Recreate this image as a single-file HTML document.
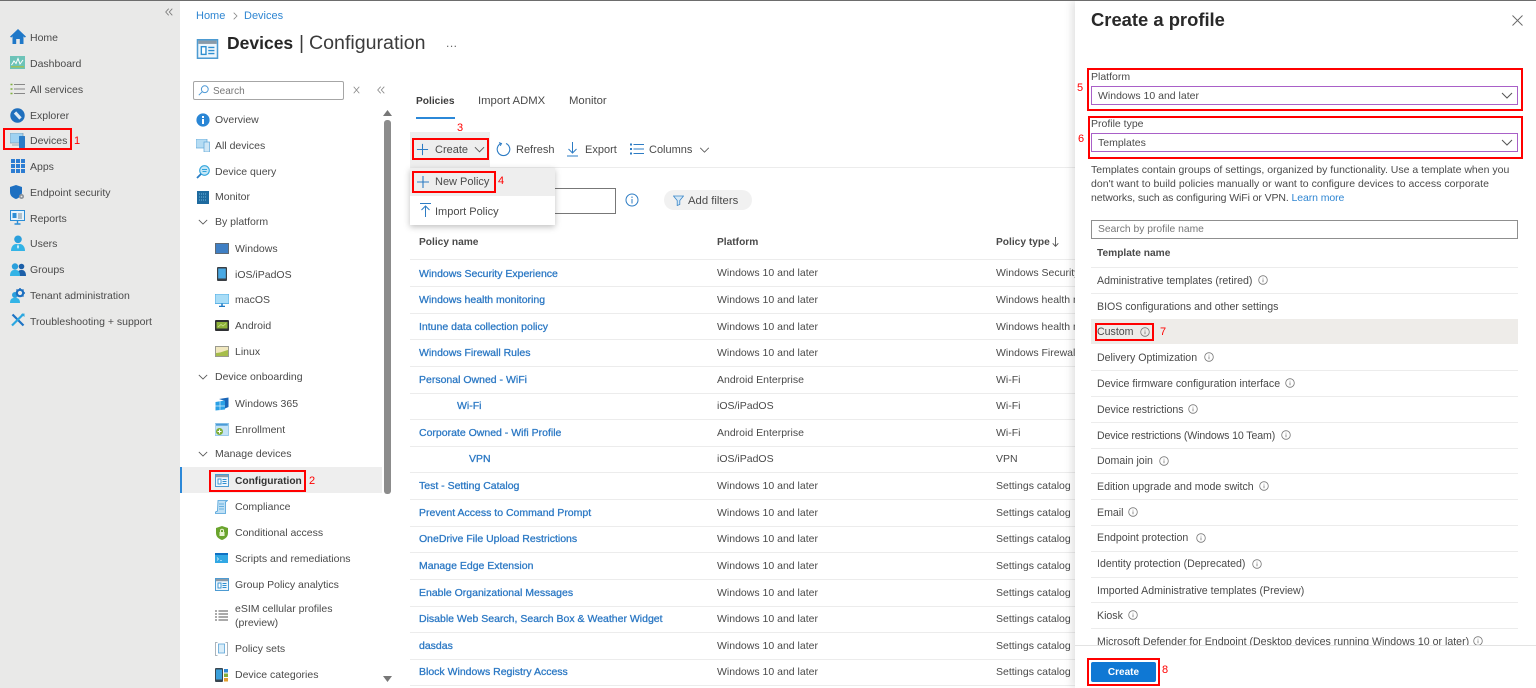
<!DOCTYPE html>
<html lang="en"><head><meta charset="utf-8"><title>Devices | Configuration</title>
<style>
html,body{margin:0;padding:0;background:#fff}
body{width:1536px;height:688px;position:relative;overflow:hidden;font:10.5px/16px "Liberation Sans",Arial,sans-serif;color:#4a4a4a;filter:blur(.35px)}
div,svg{position:absolute}
.t{position:absolute;white-space:nowrap;height:16px;line-height:16px;margin-top:1px}
.z{margin-top:0}
.m{font-size:11px}
.w{font-size:11.3px}
.l{color:#2b78c4;font-size:10.5px;-webkit-text-stroke:.28px #2b78c4;left:419px}
.p{left:717px;font-size:10.5px}.y{left:996px;font-size:10.5px}
.h{font-size:10.2px;font-weight:bold;color:#4a4a4a}
.r{height:1px;left:410px;width:665px;background:#ececec}
.pr{height:1px;left:1091px;width:427px;background:#ececec}
.b{border:2px solid #f00;box-sizing:border-box}
.n{color:#f00;font-size:11px}
.pt{left:1097px;font-size:10.6px}
</style></head><body>
<svg width="0" height="0" style="position:absolute"><defs>
<symbol id="inf" viewBox="0 0 10 10"><circle cx="5" cy="5" r="4.3" fill="none" stroke="#777" stroke-width=".8"/><path d="M5 4.4V7.3M5 2.7V3.5" stroke="#777" stroke-width=".8"/></symbol>
<symbol id="cfg" viewBox="0 0 14 13"><rect x=".5" y=".5" width="13" height="12" fill="#eef6fc" stroke="#4d9bd2"/><rect x="1" y="1" width="12" height="2.2" fill="#8a9aa8"/><rect x="3" y="5" width="3" height="5" fill="#fff" stroke="#2f8fd0" stroke-width=".9"/><path d="M7.5 5.5H11.5M7.5 7.5H11.5M7.5 9.5H11.5" stroke="#2f8fd0" stroke-width=".9"/></symbol>
<symbol id="chev" viewBox="0 0 12 7"><path d="M1 1L6 6L11 1" fill="none" stroke="#555" stroke-width="1"/></symbol>
<symbol id="plus" viewBox="0 0 14 14"><path d="M7 1V13M1 7H13" stroke="#2d7cc4" stroke-width="1.1"/></symbol>
</defs></svg>

<!-- left sidebar -->
<div style="left:0;top:0;width:180px;height:688px;background:#e9e9e8"></div>
<div style="left:0;top:0;width:1536px;height:1px;background:#6d6d6d;z-index:9"></div>
<svg style="left:165px;top:8px" width="8" height="8" viewBox="0 0 8 8"><path d="M3.7 .7L.7 4L3.7 7.3M7.3 .7L4.3 4L7.3 7.3" fill="none" stroke="#777" stroke-width=".8"/></svg>

<svg style="left:10px;top:29px" width="16" height="15" viewBox="0 0 16 15"><path d="M8 0L16 7.6L14.8 8.6L13.5 7.4V15H9.8V10H6.2V15H2.5V7.4L1.2 8.6L0 7.6Z" fill="#1f78c8"/></svg>
<span class="t" style="left:30px;top:29px">Home</span>
<svg style="left:10px;top:56px" width="15" height="13" viewBox="0 0 15 13"><rect width="15" height="13" fill="#6dc3b8"/><path d="M1.5 9L4 5L6 7.5L8 2.5L10 8L13 4" fill="none" stroke="#fff" stroke-width="1"/><rect x="1" y="10" width="13" height="1.5" fill="#9cc25c"/></svg>
<span class="t" style="left:30px;top:55px">Dashboard</span>
<svg style="left:10px;top:83px" width="15" height="12" viewBox="0 0 15 12"><path d="M4 1.5H15M4 6H15M4 10.5H15" stroke="#888" stroke-width="1"/><path d="M.5 1.5H2.5M.5 6H2.5M.5 10.5H2.5" stroke="#7fb03c" stroke-width="1.6"/></svg>
<span class="t" style="left:30px;top:81px">All services</span>
<svg style="left:10px;top:108px" width="15" height="15" viewBox="0 0 15 15"><circle cx="7.5" cy="7.5" r="7.2" fill="#1f6fbd"/><path d="M5 4.5L10.5 10.5" stroke="#dfeaf4" stroke-width="3.2"/></svg>
<span class="t" style="left:30px;top:107px">Explorer</span>
<svg style="left:10px;top:133px" width="16" height="15" viewBox="0 0 16 15"><rect x="0" y="0" width="13" height="10" fill="#9fd2f2" stroke="#7b98ad" stroke-width=".7"/><path d="M2 12H10" stroke="#9aa9b4" stroke-width="1"/><rect x="9" y="3" width="6" height="12" rx=".5" fill="#2b7cc7"/></svg>
<span class="t" style="left:30px;top:132px">Devices</span>
<svg style="left:11px;top:159px" width="14" height="14" viewBox="0 0 14 14" fill="#2d7dd2"><rect width="4" height="4"/><rect x="5" width="4" height="4"/><rect x="10" width="4" height="4"/><rect y="5" width="4" height="4"/><rect x="5" y="5" width="4" height="4"/><rect x="10" y="5" width="4" height="4"/><rect y="10" width="4" height="4"/><rect x="5" y="10" width="4" height="4"/><rect x="10" y="10" width="4" height="4"/></svg>
<span class="t" style="left:30px;top:184px">Endpoint security</span>
<span class="t" style="left:30px;top:158px">Apps</span>
<svg style="left:10px;top:185px" width="15" height="15" viewBox="0 0 15 15"><path d="M6 0L12 2V7C12 11 9 13 6 14C3 13 0 11 0 7V2Z" fill="#1e70c1"/><circle cx="11.5" cy="11.5" r="2.5" fill="#8c9299"/><circle cx="11.5" cy="11.5" r=".9" fill="#e9e9e8"/></svg>
<svg style="left:10px;top:210px" width="15" height="15" viewBox="0 0 15 15"><rect x=".5" y=".5" width="14" height="10" fill="#e6f3fb" stroke="#2c8ed6"/><rect x="2.5" y="3" width="4" height="5" fill="#2c8ed6"/><path d="M8 4H12M8 6H12M8 8H12" stroke="#7a8c99"/><path d="M7.5 11V13.5M4.5 14H10.5" stroke="#2c8ed6" stroke-width="1.4"/></svg>
<span class="t" style="left:30px;top:210px">Reports</span>
<svg style="left:11px;top:235px" width="14" height="16" viewBox="0 0 14 16"><circle cx="7" cy="4.3" r="3.8" fill="#2a9fdc"/><path d="M0 16C0 11 3 9 5 9H9C11 9 14 11 14 16Z" fill="#33b4e6"/><path d="M7 9L6 12L7 14L8 12Z" fill="#e9f6fc"/></svg>
<span class="t" style="left:30px;top:235px">Users</span>
<svg style="left:10px;top:263px" width="16" height="13" viewBox="0 0 16 13"><circle cx="11.5" cy="3.5" r="2.8" fill="#1c5fa8"/><path d="M7 13C7 8.500 9 7 11 7H12C14 7 16 8.500 16 13Z" fill="#1c5fa8"/><circle cx="5" cy="3.500" r="3.200" fill="#2a9fdc"/><path d="M0 13C0 8.500 2 7 4 7H6C8 7 10 8.500 10 13Z" fill="#33b4e6"/></svg>
<span class="t" style="left:30px;top:261px">Groups</span>
<svg style="left:10px;top:288px" width="15" height="15" viewBox="0 0 15 15"><circle cx="5" cy="7" r="3" fill="#2a9fdc"/><path d="M0 15C0 11 2 10 4 10H6C8 10 10 11 10 15Z" fill="#33b4e6"/><circle cx="10" cy="5" r="3.200" fill="none" stroke="#1c6fc0" stroke-width="2.200"/><path d="M10 0V1.500M15 5H13.500M13.500 1.500L12.400 2.600M13.500 8.500L12.400 7.400M6.500 1.500L7.600 2.600" stroke="#1c6fc0" stroke-width="1.500"/></svg>
<span class="t" style="left:30px;top:287px">Tenant administration</span>
<svg style="left:11px;top:313px" width="14" height="14" viewBox="0 0 14 14"><path d="M1.500 1.500L12.500 12.500" stroke="#1f74c4" stroke-width="2.200"/><path d="M12.500 1L1 12.500" stroke="#2ba7e0" stroke-width="2.200"/><path d="M10 1L13.500 .5L13.500 4Z" fill="#2ba7e0"/></svg>
<span class="t" style="left:30px;top:313px">Troubleshooting + support</span>

<!-- header -->
<span class="t z m" style="left:196px;top:8px;color:#2f86d2">Home</span>
<svg style="left:233px;top:12px" width="5" height="8" viewBox="0 0 5 8"><path d="M.7 .7L4 4L.7 7.3" fill="none" stroke="#888" stroke-width=".8"/></svg>
<span class="t z m" style="left:244px;top:8px;color:#2f86d2">Devices</span>
<svg style="left:196px;top:39px" width="23" height="20"><use href="#cfg"/></svg>
<span class="t z" style="left:227px;top:31px;height:24px;line-height:24px;font-size:17.500px;font-weight:bold;color:#262626">Devices</span>
<span class="t z" style="left:299px;top:31px;height:24px;line-height:24px;font-size:19.500px;color:#3b3b3b">|</span>
<span class="t z" style="left:309px;top:31px;height:24px;line-height:24px;font-size:19.600px;color:#3b3b3b">Configuration</span>
<span class="t z" style="left:446px;top:35px;color:#666;font-size:12px;letter-spacing:.5px">...</span>

<!-- resource menu -->
<div style="left:193px;top:81px;width:151px;height:19px;box-sizing:border-box;border:1px solid #a6a6a6;border-radius:2px"></div>
<svg style="left:198px;top:85px" width="11" height="11" viewBox="0 0 11 11"><circle cx="6.800" cy="4.200" r="3.400" fill="none" stroke="#4f9ad6"/><path d="M4.300 6.700L.8 10.200" stroke="#4f9ad6"/></svg>
<span class="t" style="left:213px;top:83px;color:#777;font-size:10px">Search</span>
<svg style="left:353px;top:86px" width="7" height="8" viewBox="0 0 7 8"><path d="M.7 .7L6.300 7.300M6.300 .7L.7 7.300" stroke="#888" stroke-width=".8"/></svg>
<svg style="left:377px;top:86px" width="8" height="8" viewBox="0 0 8 8"><path d="M3.700 .7L.7 4L3.700 7.300M7.300 .7L4.300 4L7.300 7.300" fill="none" stroke="#888" stroke-width=".8"/></svg>

<div style="left:180px;top:467px;width:202px;height:26px;background:#eeeeee"></div>
<div style="left:180px;top:467px;width:2px;height:26px;background:#2b88d8"></div>

<svg style="left:196px;top:113px" width="14" height="14" viewBox="0 0 14 14"><circle cx="7" cy="7" r="6.600" fill="#2a86d5"/><rect x="6" y="6" width="2" height="5" fill="#fff"/><rect x="6" y="3" width="2" height="2" fill="#fff"/></svg>
<span class="t" style="left:215px;top:111px">Overview</span>
<svg style="left:196px;top:139px" width="14" height="13" viewBox="0 0 14 13"><rect x="0" y="0" width="11" height="9" fill="#b5dcf3" stroke="#5da6d8" stroke-width=".7"/><rect x="8" y="3" width="5.500" height="10" fill="#cfe7f6" stroke="#5da6d8" stroke-width=".7"/></svg>
<span class="t" style="left:215px;top:137px">All devices</span>
<svg style="left:196px;top:165px" width="14" height="14" viewBox="0 0 14 14"><circle cx="8.500" cy="5.500" r="4.800" fill="#c5e6f6" stroke="#2fa4dc" stroke-width="1.100"/><path d="M5 9L1 13" stroke="#2a7dc5" stroke-width="1.800"/><path d="M6 4.500H11M6.500 6.500H10.500" stroke="#2fa4dc"/></svg>
<span class="t" style="left:215px;top:163px">Device query</span>
<svg style="left:197px;top:191px" width="12" height="13" viewBox="0 0 12 13"><rect width="12" height="13" fill="#1e6a9f"/><path d="M2 3H10M2 6H10M2 9H10" stroke="#6db6dc" stroke-dasharray="1 1"/></svg>
<span class="t" style="left:215px;top:188px">Monitor</span>
<svg style="left:198px;top:219px" width="10" height="6"><use href="#chev"/></svg>
<span class="t" style="left:215px;top:213px">By platform</span>
<svg style="left:215px;top:243px" width="14" height="11" viewBox="0 0 14 11"><rect width="14" height="11" fill="#5f6a75"/><rect x="1" y="1" width="12" height="9" fill="#3f7fc4"/></svg>
<span class="t" style="left:235px;top:240px">Windows</span>
<svg style="left:217px;top:267px" width="10" height="14" viewBox="0 0 10 14"><rect width="10" height="14" rx="1" fill="#3a3f44"/><rect x="1.200" y="1.500" width="7.600" height="10" fill="#49a9e4"/></svg>
<span class="t" style="left:235px;top:266px">iOS/iPadOS</span>
<svg style="left:215px;top:294px" width="14" height="13" viewBox="0 0 14 13"><rect width="14" height="9.500" rx=".5" fill="#a9ddf7" stroke="#3aa1e0" stroke-width=".8"/><path d="M7 9.500V12M4 12.500H10" stroke="#1d78c4" stroke-width="1.500"/></svg>
<span class="t" style="left:235px;top:291px">macOS</span>
<svg style="left:215px;top:320px" width="14" height="11" viewBox="0 0 14 11"><rect width="14" height="11" rx="1" fill="#2f3133"/><rect x="1.500" y="2" width="11" height="6.500" fill="#8fb339"/><path d="M3 7L6 4.500L8 6L11 3.500" stroke="#d0e59a" fill="none" stroke-width=".7"/></svg>
<span class="t" style="left:235px;top:317px">Android</span>
<svg style="left:215px;top:346px" width="14" height="11" viewBox="0 0 14 11"><rect width="14" height="11" fill="#9a9a8f"/><rect x="1" y="1" width="12" height="9" fill="#f1e8bf"/><path d="M1 10V7C5 7 9 5 13 4V10Z" fill="#a6bd4a"/></svg>
<span class="t" style="left:235px;top:343px">Linux</span>
<svg style="left:198px;top:374px" width="10" height="6"><use href="#chev"/></svg>
<span class="t" style="left:215px;top:368px">Device onboarding</span>
<svg style="left:215px;top:397px" width="14" height="14" viewBox="0 0 14 14"><path d="M4 2L13.500 .5V10L10 11.500V4Z" fill="#1a66b8"/><path d="M.5 5L10 3.500V12.500L.5 13.500Z" fill="#2aa0e6"/><path d="M5 4V13.500M.5 9H10" stroke="#d7effc" stroke-width=".7"/></svg>
<span class="t" style="left:235px;top:395px">Windows 365</span>
<svg style="left:215px;top:423px" width="14" height="13" viewBox="0 0 14 13"><rect width="13.500" height="12.500" fill="#c4e3f6" stroke="#6cb0de" stroke-width=".6"/><rect x="1" y=".7" width="11.800" height="2" fill="#4a9bd8"/><circle cx="4.500" cy="8.500" r="3.500" fill="#7fae36"/><path d="M4.500 6.500V10.500M2.500 8.500H6.500" stroke="#fff"/></svg>
<span class="t" style="left:235px;top:421px">Enrollment</span>
<svg style="left:198px;top:451px" width="10" height="6"><use href="#chev"/></svg>
<span class="t" style="left:215px;top:445px">Manage devices</span>
<svg style="left:215px;top:474px" width="14" height="13"><use href="#cfg"/></svg>
<span class="t" style="left:235px;top:473px;font-weight:bold;font-size:10.200px;color:#333">Configuration</span>
<svg style="left:215px;top:500px" width="13" height="14" viewBox="0 0 13 14"><path d="M3 .5H12.500L10.500 2V13.500H.5V12L2.500 11Z" fill="#bfe0f5" stroke="#4b9fd8" stroke-width=".8"/><path d="M4 4H9M4 6.500H9M4 9H9" stroke="#4b9fd8" stroke-width=".8"/></svg>
<span class="t" style="left:235px;top:498px">Compliance</span>
<svg style="left:216px;top:526px" width="12" height="14" viewBox="0 0 12 14"><path d="M6 0L12 2V7C12 11 9 13 6 14C3 13 0 11 0 7V2Z" fill="#6aa42d"/><rect x="3.500" y="6" width="5" height="4" fill="#e8f4cf"/><path d="M4.500 6V4.500C4.500 2.800 7.500 2.800 7.500 4.500V6" fill="none" stroke="#e8f4cf"/></svg>
<span class="t" style="left:235px;top:524px">Conditional access</span>
<svg style="left:215px;top:553px" width="13" height="10" viewBox="0 0 13 10"><rect width="13" height="10" fill="#32a8e4"/><rect width="13" height="2" fill="#0f71c4"/><path d="M2 4.500L3.500 6L2 7.500M5 7.500H7" stroke="#fff" fill="none" stroke-width=".6"/></svg>
<span class="t" style="left:235px;top:550px">Scripts and remediations</span>
<svg style="left:215px;top:578px" width="14" height="13"><use href="#cfg"/></svg>
<span class="t" style="left:235px;top:576px">Group Policy analytics</span>
<svg style="left:215px;top:610px" width="13" height="11" viewBox="0 0 13 11"><path d="M3.500 1H13M3.500 4H13M3.500 7H13M3.500 10H13M0 1H2M0 4H2M0 7H2M0 10H2" stroke="#555" stroke-width="1.100"/></svg>
<span class="t" style="left:235px;top:600px">eSIM cellular profiles</span>
<span class="t" style="left:235px;top:614px">(preview)</span>
<svg style="left:215px;top:642px" width="13" height="14" viewBox="0 0 13 14"><path d="M2.500 .5H.5V13.500H2.500M10.500 .5H12.500V13.500H10.500" fill="none" stroke="#aab4bc"/><rect x="3.500" y="2" width="6" height="9" fill="#d9edf9" stroke="#5ba3d8" stroke-width=".8"/></svg>
<span class="t" style="left:235px;top:640px">Policy sets</span>
<svg style="left:215px;top:668px" width="14" height="14" viewBox="0 0 14 14"><rect width="8" height="14" rx="1" fill="#394650"/><rect x="1" y="1.500" width="6" height="10" fill="#3aa0dc"/><rect x="9" y="1" width="4" height="3.500" fill="#2f87d0"/><rect x="9" y="5.500" width="4" height="3.500" fill="#85ad3b"/><rect x="9" y="10" width="4" height="3.500" fill="#e6a02e"/></svg>
<span class="t" style="left:235px;top:666px">Device categories</span>

<!-- scrollbar -->
<svg style="left:383px;top:110px" width="9" height="6"><path d="M4.500 0L9 6H0Z" fill="#777"/></svg>
<div style="left:384px;top:120px;width:7px;height:374px;background:#8c8c8c;border-radius:3px"></div>
<svg style="left:383px;top:676px" width="9" height="6"><path d="M0 0H9L4.500 6Z" fill="#777"/></svg>

<!-- tabs -->
<span class="t h" style="left:416px;top:93px;color:#3d3d3d">Policies</span>
<div style="left:416px;top:117px;width:39px;height:2px;background:#2b88d8"></div>
<span class="t w" style="left:478px;top:92px">Import ADMX</span>
<span class="t w" style="left:569px;top:92px">Monitor</span>

<!-- toolbar -->
<div style="left:410px;top:132px;width:80px;height:36px;background:#eeeeee"></div>
<svg style="left:416px;top:143px" width="13" height="13"><use href="#plus"/></svg>
<span class="t m" style="left:435px;top:141px">Create</span>
<svg style="left:474px;top:146px" width="11" height="7"><use href="#chev"/></svg>
<svg style="left:496px;top:142px" width="15" height="15" viewBox="0 0 15 15"><path d="M5 1.500A6.300 6.300 0 1 0 10 1.500" fill="none" stroke="#2d7cc4" stroke-width="1.100"/><path d="M3 .6L5.500 1.500L4.300 3.800" fill="none" stroke="#2d7cc4"/></svg>
<span class="t m" style="left:516px;top:141px">Refresh</span>
<svg style="left:567px;top:142px" width="11" height="15" viewBox="0 0 11 15"><path d="M5.500 0V11M1.500 7L5.500 11L9.500 7M0 14H11" fill="none" stroke="#2d7cc4"/></svg>
<span class="t m" style="left:585px;top:141px">Export</span>
<svg style="left:630px;top:143px" width="14" height="12" viewBox="0 0 14 12"><path d="M3.500 1.500H14M3.500 6H14M3.500 10.500H14" stroke="#2d7cc4"/><path d="M0 1.500H2M0 6H2M0 10.500H2" stroke="#2d7cc4" stroke-width="2"/></svg>
<span class="t m" style="left:649px;top:141px">Columns</span>
<svg style="left:699px;top:147px" width="11" height="6"><use href="#chev"/></svg>
<div style="left:490px;top:167px;width:585px;height:1px;background:#ececec"></div>

<!-- filters -->
<div style="left:500px;top:188px;width:116px;height:26px;box-sizing:border-box;border:1px solid #777"></div>
<svg style="left:625px;top:193px" width="14" height="14" viewBox="0 0 14 14"><circle cx="7" cy="7" r="6" fill="none" stroke="#2d7cc4" stroke-width="1"/><path d="M7 6V10.500M7 3.500V5" stroke="#2d7cc4"/></svg>
<div style="left:664px;top:190px;width:88px;height:20px;background:#f1f1f1;border-radius:10px"></div>
<svg style="left:673px;top:195px" width="11" height="11" viewBox="0 0 11 11"><path d="M.5 1H10.500L6.800 5.500V9.500L4.200 10.500V5.500Z" fill="#d6e8f6" stroke="#3a86c8" stroke-width=".8"/></svg>
<span class="t w" style="left:688px;top:192px">Add filters</span>

<!-- table -->
<span class="t h" style="left:419px;top:234px">Policy name</span>
<span class="t h" style="left:717px;top:234px">Platform</span>
<span class="t h" style="left:996px;top:234px">Policy type</span>
<svg style="left:1052px;top:237px" width="7" height="10" viewBox="0 0 7 10"><path d="M3.500 0V9M.7 6.300L3.500 9.300L6.300 6.300" fill="none" stroke="#555" stroke-width=".9"/></svg>
<div class="r" style="top:259px"></div>

<span class="t l" style="top:265px">Windows Security Experience</span><span class="t p" style="top:264px">Windows 10 and later</span><span class="t y" style="top:264px">Windows Security</span><div class="r" style="top:286px"></div>
<span class="t l" style="top:291px">Windows health monitoring</span><span class="t p" style="top:291px">Windows 10 and later</span><span class="t y" style="top:291px">Windows health m</span><div class="r" style="top:313px"></div>
<span class="t l" style="top:318px">Intune data collection policy</span><span class="t p" style="top:318px">Windows 10 and later</span><span class="t y" style="top:318px">Windows health m</span><div class="r" style="top:339px"></div>
<span class="t l" style="top:344px">Windows Firewall Rules</span><span class="t p" style="top:344px">Windows 10 and later</span><span class="t y" style="top:344px">Windows Firewall</span><div class="r" style="top:366px"></div>
<span class="t l" style="top:371px">Personal Owned - WiFi</span><span class="t p" style="top:371px">Android Enterprise</span><span class="t y" style="top:371px">Wi-Fi</span><div class="r" style="top:393px"></div>
<span class="t l" style="top:397px;left:457px">Wi-Fi</span><span class="t p" style="top:397px">iOS/iPadOS</span><span class="t y" style="top:397px">Wi-Fi</span><div class="r" style="top:419px"></div>
<span class="t l" style="top:424px">Corporate Owned - Wifi Profile</span><span class="t p" style="top:424px">Android Enterprise</span><span class="t y" style="top:424px">Wi-Fi</span><div class="r" style="top:446px"></div>
<span class="t l" style="top:450px;left:469px">VPN</span><span class="t p" style="top:450px">iOS/iPadOS</span><span class="t y" style="top:450px">VPN</span><div class="r" style="top:472px"></div>
<span class="t l" style="top:477px">Test - Setting Catalog</span><span class="t p" style="top:477px">Windows 10 and later</span><span class="t y" style="top:477px">Settings catalog</span><div class="r" style="top:499px"></div>
<span class="t l" style="top:504px">Prevent Access to Command Prompt</span><span class="t p" style="top:504px">Windows 10 and later</span><span class="t y" style="top:504px">Settings catalog</span><div class="r" style="top:526px"></div>
<span class="t l" style="top:530px">OneDrive File Upload Restrictions</span><span class="t p" style="top:530px">Windows 10 and later</span><span class="t y" style="top:530px">Settings catalog</span><div class="r" style="top:552px"></div>
<span class="t l" style="top:557px">Manage Edge Extension</span><span class="t p" style="top:557px">Windows 10 and later</span><span class="t y" style="top:557px">Settings catalog</span><div class="r" style="top:579px"></div>
<span class="t l" style="top:584px">Enable Organizational Messages</span><span class="t p" style="top:584px">Windows 10 and later</span><span class="t y" style="top:584px">Settings catalog</span><div class="r" style="top:606px"></div>
<span class="t l" style="top:610px">Disable Web Search, Search Box &amp; Weather Widget</span><span class="t p" style="top:610px">Windows 10 and later</span><span class="t y" style="top:610px">Settings catalog</span><div class="r" style="top:632px"></div>
<span class="t l" style="top:637px">dasdas</span><span class="t p" style="top:637px">Windows 10 and later</span><span class="t y" style="top:637px">Settings catalog</span><div class="r" style="top:659px"></div>
<span class="t l" style="top:663px">Block Windows Registry Access</span><span class="t p" style="top:663px">Windows 10 and later</span><span class="t y" style="top:663px">Settings catalog</span><div class="r" style="top:685px"></div>

<!-- dropdown -->
<div style="left:410px;top:168px;width:145px;height:57px;background:#fff;box-shadow:0 2px 6px rgba(0,0,0,.25);z-index:3">
<div style="left:0;top:0;width:145px;height:28px;background:#eeeeee"></div>
<svg style="left:6px;top:7px" width="14" height="14"><use href="#plus"/></svg>
<span class="t m" style="left:25px;top:5px">New Policy</span>
<svg style="left:10px;top:35px" width="11" height="14" viewBox="0 0 11 14"><path d="M0 .5H11M5.500 3V14M1.500 7L5.500 3L9.500 7" fill="none" stroke="#2d7cc4"/></svg>
<span class="t m" style="left:25px;top:35px">Import Policy</span>
</div>

<!-- side panel -->
<div style="left:1075px;top:1px;width:461px;height:687px;background:#fff;box-shadow:-3px 0 8px rgba(0,0,0,.12);z-index:4"></div>
<div style="left:0;top:0;width:1536px;height:688px;z-index:5">
<span class="t z" style="left:1091px;top:8px;height:24px;line-height:24px;font-size:18.400px;font-weight:bold;color:#292929">Create a profile</span>
<svg style="left:1512px;top:15px" width="11" height="11" viewBox="0 0 11 11"><path d="M.5 .5L10.500 10.500M10.500 .5L.5 10.500" stroke="#666" stroke-width=".9"/></svg>

<span class="t" style="left:1091px;top:68px">Platform</span>
<div style="left:1091px;top:86px;width:427px;height:19px;box-sizing:border-box;border:1px solid #a960c8"></div>
<span class="t" style="left:1098px;top:87px">Windows 10 and later</span>
<svg style="left:1501px;top:92px" width="12" height="7"><use href="#chev"/></svg>
<span class="t" style="left:1091px;top:115px">Profile type</span>
<div style="left:1091px;top:133px;width:427px;height:19px;box-sizing:border-box;border:1px solid #a960c8"></div>
<span class="t" style="left:1098px;top:134px">Templates</span>
<svg style="left:1501px;top:139px" width="12" height="7"><use href="#chev"/></svg>

<span class="t" style="left:1091px;top:161px">Templates contain groups of settings, organized by functionality. Use a template when you</span>
<span class="t" style="left:1091px;top:175px;letter-spacing:.03px">don't want to build policies manually or want to configure devices to access corporate</span>
<span class="t" style="left:1091px;top:189px;letter-spacing:-.1px">networks, such as configuring WiFi or VPN. <span style="color:#2f86d2">Learn more</span></span>

<div style="left:1091px;top:220px;width:427px;height:19px;box-sizing:border-box;border:1px solid #8f8f8f"></div>
<span class="t" style="left:1098px;top:221px;color:#777;font-size:10.300px">Search by profile name</span>
<span class="t h" style="left:1097px;top:245px">Template name</span>
<div class="pr" style="top:267px"></div>

<span class="t pt" style="top:272px">Administrative templates (retired)</span><svg style="left:1258px;top:275px" width="10" height="10"><use href="#inf"/></svg><div class="pr" style="top:293px"></div>
<span class="t pt" style="top:298px">BIOS configurations and other settings</span>
<div style="left:1091px;top:319px;width:427px;height:25px;background:#eeece9"></div>
<span class="t pt" style="top:323px">Custom</span><svg style="left:1140px;top:327px" width="10" height="10"><use href="#inf"/></svg>
<span class="t pt" style="top:349px">Delivery Optimization</span><svg style="left:1204px;top:352px" width="10" height="10"><use href="#inf"/></svg><div class="pr" style="top:370px"></div>
<span class="t pt" style="top:375px">Device firmware configuration interface</span><svg style="left:1285px;top:378px" width="10" height="10"><use href="#inf"/></svg><div class="pr" style="top:396px"></div>
<span class="t pt" style="top:401px">Device restrictions</span><svg style="left:1188px;top:404px" width="10" height="10"><use href="#inf"/></svg><div class="pr" style="top:422px"></div>
<span class="t pt" style="top:427px;letter-spacing:-.13px">Device restrictions (Windows 10 Team)</span><svg style="left:1281px;top:430px" width="10" height="10"><use href="#inf"/></svg><div class="pr" style="top:448px"></div>
<span class="t pt" style="top:452px">Domain join</span><svg style="left:1159px;top:456px" width="10" height="10"><use href="#inf"/></svg><div class="pr" style="top:473px"></div>
<span class="t pt" style="top:478px">Edition upgrade and mode switch</span><svg style="left:1259px;top:481px" width="10" height="10"><use href="#inf"/></svg><div class="pr" style="top:499px"></div>
<span class="t pt" style="top:504px">Email</span><svg style="left:1128px;top:507px" width="10" height="10"><use href="#inf"/></svg><div class="pr" style="top:525px"></div>
<span class="t pt" style="top:529px">Endpoint protection</span><svg style="left:1196px;top:533px" width="10" height="10"><use href="#inf"/></svg><div class="pr" style="top:551px"></div>
<span class="t pt" style="top:555px">Identity protection (Deprecated)</span><svg style="left:1252px;top:559px" width="10" height="10"><use href="#inf"/></svg><div class="pr" style="top:577px"></div>
<span class="t pt" style="top:582px">Imported Administrative templates (Preview)</span><div class="pr" style="top:602px"></div>
<span class="t pt" style="top:607px">Kiosk</span><svg style="left:1128px;top:610px" width="10" height="10"><use href="#inf"/></svg><div class="pr" style="top:628px"></div>
<span class="t pt" style="top:633px">Microsoft Defender for Endpoint (Desktop devices running Windows 10 or later)</span><svg style="left:1473px;top:636px" width="10" height="10"><use href="#inf"/></svg>

<div style="left:1075px;top:645px;width:461px;height:43px;background:#fff;border-top:1px solid #e3e3e3;box-sizing:border-box"></div>
<div style="left:1091px;top:662px;width:65px;height:20px;background:#0f78d4;border-radius:2px;color:#fff;font-weight:bold;font-size:10px;line-height:21px;text-align:center">Create</div>
</div>

<!-- annotations -->
<div style="left:0;top:0;width:1536px;height:688px;z-index:8">
<div class="b" style="left:3px;top:128px;width:69px;height:22px"></div><span class="t n" style="left:74px;top:132px">1</span>
<div class="b" style="left:209px;top:470px;width:97px;height:22px"></div><span class="t n" style="left:309px;top:472px">2</span>
<div class="b" style="left:412px;top:138px;width:77px;height:22px"></div><span class="t n" style="left:457px;top:119px">3</span>
<div class="b" style="left:412px;top:171px;width:84px;height:22px"></div><span class="t n" style="left:498px;top:172px">4</span>
<div class="b" style="left:1087px;top:68px;width:436px;height:43px"></div><span class="t n" style="left:1077px;top:79px">5</span>
<div class="b" style="left:1088px;top:116px;width:435px;height:43px"></div><span class="t n" style="left:1078px;top:130px">6</span>
<div class="b" style="left:1095px;top:323px;width:59px;height:18px"></div><span class="t n" style="left:1160px;top:323px">7</span>
<div class="b" style="left:1087px;top:658px;width:73px;height:28px"></div><span class="t n" style="left:1162px;top:661px">8</span>
</div>
</body></html>
